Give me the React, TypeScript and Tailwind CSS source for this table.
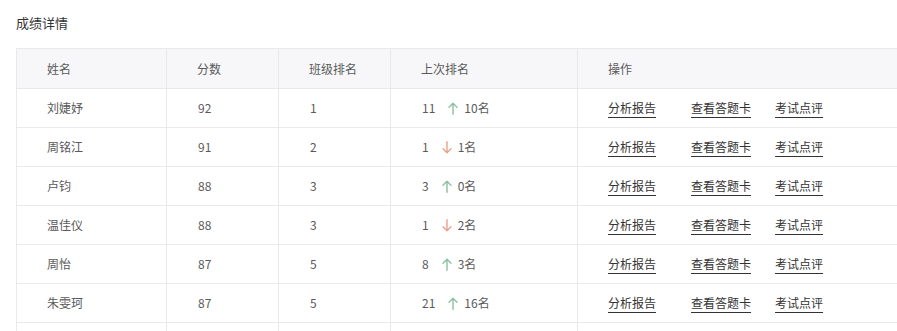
type Row = { name: string; score: number; rank: number; last: number; delta: number; up: boolean };

const rows: Row[] = [
  { name: "刘婕妤", score: 92, rank: 1, last: 11, delta: 10, up: true },
  { name: "周铭江", score: 91, rank: 2, last: 1, delta: 1, up: false },
  { name: "卢钧", score: 88, rank: 3, last: 3, delta: 0, up: true },
  { name: "温佳仪", score: 88, rank: 3, last: 1, delta: 2, up: false },
  { name: "周怡", score: 87, rank: 5, last: 8, delta: 3, up: true },
  { name: "朱雯珂", score: 87, rank: 5, last: 21, delta: 16, up: true },
];

const cols = "grid grid-cols-[150px_112px_112px_187px_1fr]";

// thin arrow used in the "上次排名" column
function Arrow({ up }: { up: boolean }) {
  return (
    <svg
      width="10"
      height="13"
      viewBox="0 0 10 13"
      fill="none"
      stroke={up ? "#8cbf9f" : "#e8a28c"}
      strokeWidth="1.4"
      strokeLinecap="round"
      strokeLinejoin="round"
      className={`ml-[13px] mr-[6px] ${up ? "" : "rotate-180"}`}
    >
      <path d="M5 12.2V1.2M1 5.2l4-4 4 4" />
    </svg>
  );
}

export default function App() {
  return (
    <div
      className="w-[897px] h-[331px] overflow-hidden bg-white"
      style={{ fontFamily: '"Noto Sans CJK SC", "Liberation Sans", sans-serif' }}
    >
      <h1 className="pl-4 pt-[13px] h-[48px] text-[13px] text-[#333]">成绩详情</h1>
      <div className="ml-4 w-[930px] border-l border-t border-[#e9e9ec] text-[12px] text-[#5a5a5a]">
        <div className={`${cols} h-10 bg-[#f7f7f9] border-b border-[#e9e9ec]`}>
          {["姓名", "分数", "班级排名", "上次排名", "操作"].map((h, i) => (
            <div key={h} className={`flex items-center pl-[30px] ${i < 4 ? "border-r border-[#e9e9ec]" : ""}`}>
              {h}
            </div>
          ))}
        </div>
        {[...rows, null].map((r, idx) => (
          <div key={idx} className={`${cols} h-[39px] border-b border-[#eaeaed]`}>
            <div className="flex items-center pl-[30px] border-r border-[#e9e9ec]">{r?.name}</div>
            <div className="flex items-center pl-[31px] border-r border-[#e9e9ec]">{r?.score}</div>
            <div className="flex items-center pl-[31px] border-r border-[#e9e9ec]">{r?.rank}</div>
            <div className="flex items-center pl-[31px] border-r border-[#e9e9ec]">
              {r && (
                <>
                  <span>{r.last}</span>
                  <Arrow up={r.up} />
                  <span>{r.delta}名</span>
                </>
              )}
            </div>
            <div className="flex items-center pl-[30px] text-[#333]">
              {r && (
                <>
                  <span className="underline underline-offset-[4px] mr-[35px]">分析报告</span>
                  <span className="underline underline-offset-[4px] mr-[24px]">查看答题卡</span>
                  <span className="underline underline-offset-[4px]">考试点评</span>
                </>
              )}
            </div>
          </div>
        ))}
      </div>
    </div>
  );
}
